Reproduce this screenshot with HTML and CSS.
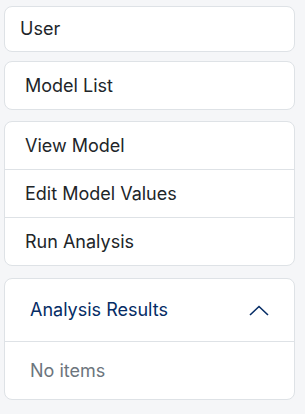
FILE: index.html
```html
<!DOCTYPE html>
<html lang="en">
<head>
  <meta charset="UTF-8" />
  <meta name="viewport" content="width=device-width, initial-scale=1.0" />
  <title>Model Sidebar</title>
  <link rel="stylesheet" href="styles.css">
</head>
<body>
  <nav class="sidebar">
    <div class="card single">User</div>

    <div class="card list">
      <div class="list-item">Model List</div>
    </div>

    <div class="card list">
      <div class="list-item">View Model</div>
      <div class="list-item">Edit Model Values</div>
      <div class="list-item">Run Analysis</div>
    </div>

    <div class="card accordion">
      <div class="accordion-header">
        <span>Analysis Results</span>
        <svg class="chevron" width="20" height="11" viewBox="0 0 20 11" fill="none">
          <path d="M1 10 L10 1.5 L19 10" stroke="#052c65" stroke-width="1.6" />
        </svg>
      </div>
      <div class="accordion-body">No items</div>
    </div>
  </nav>
</body>
</html>
```

FILE: styles.css
```css
body {
  margin: 0;
  font-family: Inter, "Noto Sans", sans-serif;
  font-size: 18px;
  line-height: 24px;
  background: #f5f6f8;
  color: #212529;
}
.sidebar {
  display: flex;
  flex-direction: column;
  gap: 9px;
  padding: 6px 10px 14px 4px;
}
.card {
  background: #fff;
  border: 1px solid #dee2e6;
  border-radius: 8px;
}
.card.single {
  padding: 10px 15px;
}
.list-item {
  padding: 12px 20px 11px;
}
.list-item + .list-item {
  border-top: 1px solid #dee2e6;
}
.list + .list {
  margin-top: 2px;
}
.accordion {
  margin-top: 3px;
}
.accordion-header {
  display: flex;
  justify-content: space-between;
  align-items: center;
  padding: 19px 25px;
  color: #052c65;
  border-bottom: 1px solid #dee2e6;
}
.accordion-body {
  padding: 17px 25px 16px;
  color: #6c757d;
}
```
